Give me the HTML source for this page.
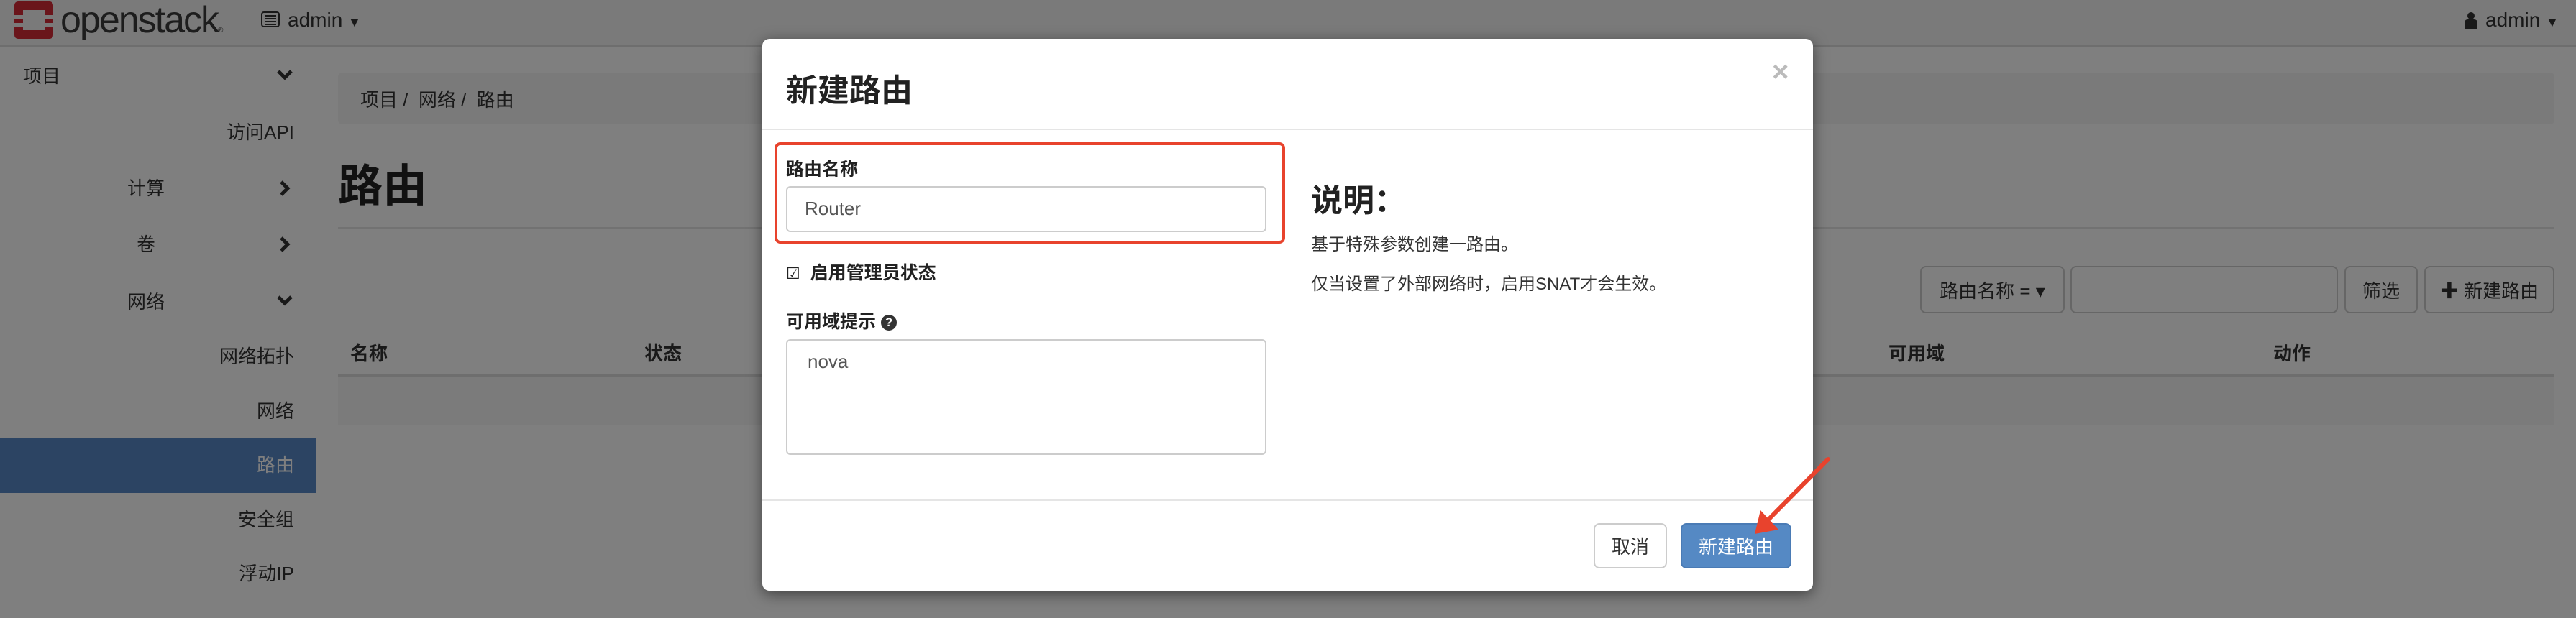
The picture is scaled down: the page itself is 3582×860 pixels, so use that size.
<!DOCTYPE html>
<html><head><meta charset="utf-8"><style>
*{box-sizing:border-box;margin:0;padding:0}
body{width:3582px;height:860px;position:relative;overflow:hidden;background:#fff;font-family:"Liberation Sans","Noto Sans CJK SC",sans-serif;color:#333}
.a{position:absolute;white-space:nowrap}
.nav{left:0;top:0;width:3582px;height:65px;background:#f4f4f4;border-bottom:3px solid #ddd}
.side{font-size:26px;color:#333;line-height:30px}
.btn{border:2px solid #ccc;border-radius:8px;background:#fff;font-size:26px;display:flex;align-items:center;justify-content:center}
.ov{left:0;top:0;width:3582px;height:860px;background:rgba(0,0,0,.5)}
</style></head><body>
<div class="a nav"></div>
<svg class="a" style="left:20px;top:2px" width="54" height="52" viewBox="0 0 54 52"><rect width="54" height="52" rx="5" fill="#d42a36"/><rect x="12" y="12" width="30" height="28" fill="#f4f4f4"/><rect x="0" y="19" width="12" height="6" fill="#f4f4f4"/><rect x="42" y="19" width="12" height="6" fill="#f4f4f4"/><rect x="0" y="30" width="12" height="5" fill="#f4f4f4"/><rect x="42" y="30" width="12" height="5" fill="#f4f4f4"/></svg>
<div class="a" style="left:84px;top:-2px;font-size:52px;color:#3a3a3a;letter-spacing:-2px">openstack<span style="font-size:10px">®</span></div>
<svg class="a" style="left:363px;top:16px" width="26" height="22" viewBox="0 0 26 22"><rect x="1" y="1" width="24" height="20" rx="3" fill="none" stroke="#333" stroke-width="2"/><path d="M5 6h16M5 10h16M5 14h16M5 18h16" stroke="#333" stroke-width="2"/></svg>
<div class="a" style="left:400px;top:12px;font-size:28px;color:#333">admin <span style="font-size:18px">▼</span></div>
<svg class="a" style="left:3427px;top:16px" width="18" height="24" viewBox="0 0 18 24"><circle cx="9" cy="6" r="5" fill="#333"/><path d="M0 24 V16 Q0 11 5 11 H13 Q18 11 18 16 V24Z" fill="#333"/></svg>
<div class="a" style="left:3456px;top:12px;font-size:28px;color:#333">admin <span style="font-size:18px">▼</span></div>

<div class="a side" style="left:32px;top:91px">项目</div>
<div class="a side" style="right:3173px;top:169px">访问API</div>
<div class="a side" style="left:177px;top:247px">计算</div>
<div class="a side" style="left:190px;top:325px">卷</div>
<div class="a side" style="left:177px;top:405px">网络</div>
<svg class="a" style="left:384px;top:96px" width="24" height="16" viewBox="0 0 24 16"><path d="M3 3 L12 12 L21 3" fill="none" stroke="#333" stroke-width="5"/></svg>
<svg class="a" style="left:388px;top:250px" width="16" height="24" viewBox="0 0 16 24"><path d="M3 3 L12 12 L3 21" fill="none" stroke="#333" stroke-width="5"/></svg>
<svg class="a" style="left:388px;top:328px" width="16" height="24" viewBox="0 0 16 24"><path d="M3 3 L12 12 L3 21" fill="none" stroke="#333" stroke-width="5"/></svg>
<svg class="a" style="left:384px;top:410px" width="24" height="16" viewBox="0 0 24 16"><path d="M3 3 L12 12 L21 3" fill="none" stroke="#333" stroke-width="5"/></svg>
<div class="a side" style="right:3173px;top:481px">网络拓扑</div>
<div class="a side" style="right:3173px;top:557px">网络</div>
<div class="a" style="left:0;top:609px;width:440px;height:77px;background:#5889c6"></div>
<div class="a side" style="right:3173px;top:632px;color:#fff">路由</div>
<div class="a side" style="right:3173px;top:708px">安全组</div>
<div class="a side" style="right:3173px;top:783px">浮动IP</div>

<div class="a" style="left:470px;top:101px;width:3082px;height:72px;background:#f4f4f4;border-radius:6px"></div>
<div class="a" style="left:501px;top:124px;font-size:26px;line-height:30px">项目 / &nbsp;网络 / &nbsp;路由</div>
<div class="a" style="left:470px;top:208px;font-size:62px;font-weight:bold;color:#222">路由</div>
<div class="a" style="left:470px;top:316px;width:3082px;height:2px;background:#e4e4e4"></div>
<div class="a btn" style="left:2670px;top:370px;width:201px;height:66px">路由名称 = ▾</div>
<div class="a btn" style="left:2879px;top:370px;width:372px;height:66px"></div>
<div class="a btn" style="left:3260px;top:370px;width:102px;height:66px">筛选</div>
<div class="a btn" style="left:3371px;top:370px;width:181px;height:66px">✚ 新建路由</div>
<div class="a" style="left:487px;top:472px;font-size:26px;font-weight:bold">名称</div>
<div class="a" style="left:896px;top:472px;font-size:26px;font-weight:bold">状态</div>
<div class="a" style="left:2626px;top:472px;font-size:26px;font-weight:bold">可用域</div>
<div class="a" style="left:3161px;top:472px;font-size:26px;font-weight:bold">动作</div>
<div class="a" style="left:470px;top:520px;width:3082px;height:4px;background:#ddd"></div>
<div class="a" style="left:470px;top:524px;width:3082px;height:68px;background:#f6f6f6"></div>

<div class="a ov"></div>

<div class="a" style="left:1060px;top:54px;width:1461px;height:768px;background:#fff;border-radius:10px;box-shadow:0 5px 20px rgba(0,0,0,.5)"></div>
<div class="a" style="left:1093px;top:90px;font-size:44px;color:#222;font-weight:bold">新建路由</div>
<div class="a" style="left:2464px;top:78px;font-size:40px;color:#bbb;font-weight:bold">×</div>
<div class="a" style="left:1060px;top:179px;width:1461px;height:2px;background:#e5e5e5"></div>
<div class="a" style="left:1077px;top:198px;width:710px;height:141px;border:4px solid #e8432d;border-radius:8px"></div>
<div class="a" style="left:1093px;top:216px;font-size:25px;font-weight:bold;color:#222">路由名称</div>
<div class="a" style="left:1093px;top:259px;width:668px;height:64px;border:2px solid #ccc;border-radius:6px;font-size:26px;padding:14px 0 0 24px;color:#555">Router</div>
<div class="a" style="left:1093px;top:360px;font-size:25px;font-weight:bold;color:#222"><span style="font-size:22px;font-weight:normal">☑</span> &nbsp;启用管理员状态</div>
<div class="a" style="left:1093px;top:428px;font-size:25px;font-weight:bold;color:#222">可用域提示 <span style="display:inline-block;width:22px;height:22px;border-radius:50%;background:#333;color:#fff;font-size:17px;text-align:center;line-height:22px;vertical-align:middle">?</span></div>
<div class="a" style="left:1093px;top:472px;width:668px;height:161px;border:2px solid #ccc;border-radius:6px;font-size:26px;padding:14px 0 0 28px;color:#555">nova</div>
<div class="a" style="left:1823px;top:243px;font-size:44px;font-weight:bold;color:#222">说明：</div>
<div class="a" style="left:1823px;top:320px;font-size:24px;color:#333">基于特殊参数创建一路由。</div>
<div class="a" style="left:1823px;top:375px;font-size:24px;color:#333">仅当设置了外部网络时，启用SNAT才会生效。</div>
<div class="a" style="left:1060px;top:695px;width:1461px;height:2px;background:#e5e5e5"></div>
<div class="a btn" style="left:2216px;top:728px;width:102px;height:63px;color:#333">取消</div>
<div class="a btn" style="left:2337px;top:728px;width:154px;height:63px;background:#5589c4;border-color:#4a7bb5;color:#fff">新建路由</div>
<svg class="a" style="left:2420px;top:620px" width="140" height="180" viewBox="0 0 140 180"><path d="M122 19 L40 102" stroke="#e8432d" stroke-width="6" stroke-linecap="round"/><path d="M20 123 L28 90 L53 117 Z" fill="#e8432d"/></svg>
</body></html>
